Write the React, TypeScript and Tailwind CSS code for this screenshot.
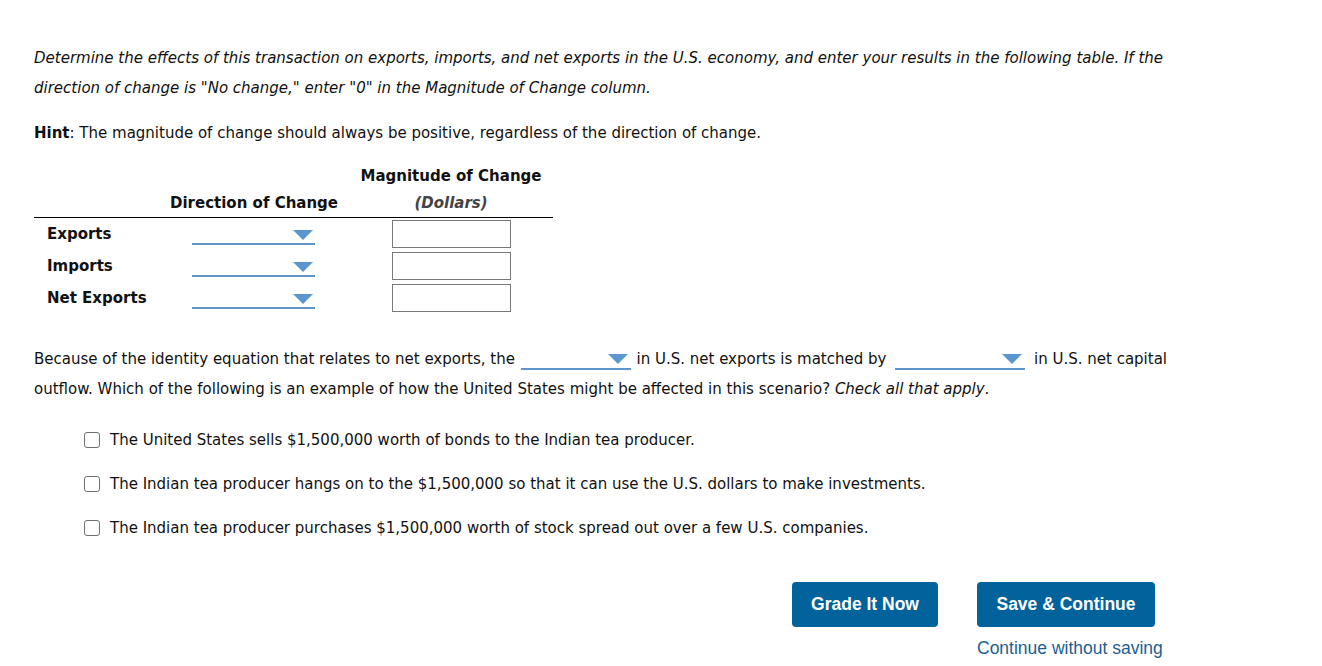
import React from "react";

function Arrow() {
  return (
    <svg width="20" height="10" viewBox="0 0 20 10" className="block">
      <polygon points="0,0 20,0 10,10" fill="#5b97cf" />
    </svg>
  );
}

function Dropdown({ w }: { w: string }) {
  return (
    <div className={`${w} h-[22px] border-b-2 border-[#5b94c8] flex items-start justify-end pt-[7px] pr-[2px]`}>
      <Arrow />
    </div>
  );
}

function InlineDropdown({ w }: { w: string }) {
  return (
    <span className={`relative inline-block ${w} h-[16px] align-[-6px] border-b-2 border-[#5b94c8]`}>
      <span className="absolute top-0 right-[3px]">
        <Arrow />
      </span>
    </span>
  );
}

function Checkbox() {
  return <span className="inline-block w-[16px] h-[16px] border border-[#707070] rounded-[3px] bg-white shrink-0" />;
}

export default function App() {
  const rows = ["Exports", "Imports", "Net Exports"];
  return (
    <div className="min-h-[666px] bg-white text-[#111] pl-[34px] pt-[43px] font-['DejaVu_Sans',Verdana,sans-serif] text-[15px]">
      <p className="italic leading-[30px] w-[1185px]">
        Determine the effects of this transaction on exports, imports, and net exports in the U.S. economy, and enter your results in the following table. If the direction of change is "No change," enter "0" in the Magnitude of Change column.
      </p>
      <p className="mt-[15px] leading-[30px]">
        <b>Hint</b>: The magnitude of change should always be positive, regardless of the direction of change.
      </p>

      <div className="mt-[15px] w-[519px]">
        <div className="grid grid-cols-[136px_166px_217px] border-b border-black">
          <div />
          <div />
          <div className="pl-[13px] text-center font-bold leading-[26px] whitespace-nowrap">Magnitude of Change</div>
          <div />
          <div className="text-center font-bold leading-[28px] whitespace-nowrap">Direction of Change</div>
          <div className="pl-[13px] text-center font-bold italic text-[#444] leading-[28px]">(Dollars)</div>
        </div>
        <div>
          {rows.map((r) => (
            <div key={r} className="grid grid-cols-[136px_166px_217px] h-[32px] items-center">
              <div className="pl-[13px] font-bold">{r}</div>
              <div className="flex justify-center">
                <Dropdown w="w-[123px]" />
              </div>
              <div className="pl-[13px] flex justify-center">
                <div className="w-[119px] h-[28px] border border-[#7a7a7a] bg-white" />
              </div>
            </div>
          ))}
        </div>
      </div>

      <p className="mt-[30px] leading-[30px] w-[1160px]">
        Because of the identity equation that relates to net exports, the{" "}
        <InlineDropdown w="w-[110px] mx-[1px]" />{" "}
        in U.S. net exports is matched by{" "}
        <InlineDropdown w="w-[130px] mx-[4px]" />{" "}
        in U.S. net capital outflow. Which of the following is an example of how the United States might be affected in this scenario? <i>Check all that apply</i>.
      </p>

      <div className="mt-[25px] pl-[50px] flex flex-col gap-[22px]">
        {[
          "The United States sells $1,500,000 worth of bonds to the Indian tea producer.",
          "The Indian tea producer hangs on to the $1,500,000 so that it can use the U.S. dollars to make investments.",
          "The Indian tea producer purchases $1,500,000 worth of stock spread out over a few U.S. companies.",
        ].map((t) => (
          <label key={t} className="flex items-center gap-[10px] leading-[22px]">
            <Checkbox />
            <span>{t}</span>
          </label>
        ))}
      </div>

      <div className="mt-[43px] ml-[758px] flex gap-[39px] font-['Liberation_Sans',Arial,sans-serif]">
        <button className="w-[146px] h-[45px] rounded-[4px] bg-[#02629c] text-white font-bold text-[17.5px]">
          Grade It Now
        </button>
        <div className="flex flex-col items-start">
          <button className="w-[178px] h-[45px] rounded-[4px] bg-[#02629c] text-white font-bold text-[17.5px]">
            Save &amp; Continue
          </button>
          <span className="mt-[10px] text-[#1b5f93] text-[17.5px] leading-[22px] whitespace-nowrap">Continue without saving</span>
        </div>
      </div>
    </div>
  );
}
